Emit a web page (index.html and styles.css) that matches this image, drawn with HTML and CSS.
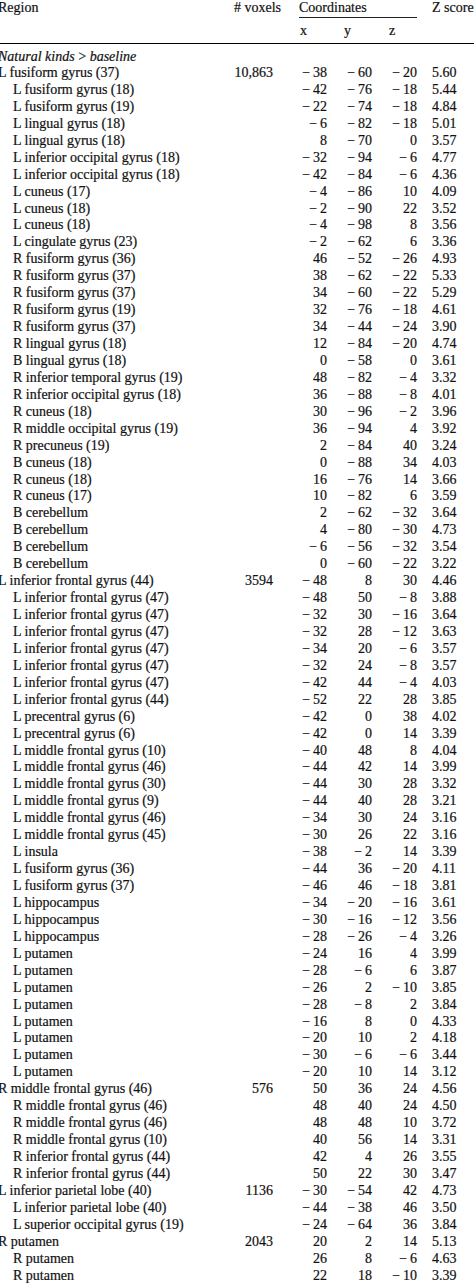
FILE: index.html
```html
<!DOCTYPE html>
<html lang="en">
<head>
<meta charset="utf-8">
<title>Activation clusters</title>
<link rel="stylesheet" href="styles.css">
</head>
<body>
<table class="results">
<colgroup>
<col class="c-region"><col class="c-vox"><col class="c-x"><col class="c-y"><col class="c-z"><col class="c-zs">
</colgroup>
<thead>
<tr>
<th rowspan="2" class="h-region">Region</th>
<th rowspan="2" class="h-vox"># voxels</th>
<th colspan="3" class="h-coord"><div class="coord-label">Coordinates</div></th>
<th rowspan="2" class="h-zs">Z score</th>
</tr>
<tr>
<th class="h-x">x</th>
<th class="h-y">y</th>
<th class="h-z">z</th>
</tr>
</thead>
<tbody>
<tr class="group"><td colspan="6">Natural kinds&thinsp;&gt;&thinsp;baseline</td></tr>
<tr class="lead"><td>L fusiform gyrus (37)</td><td>10,863</td><td>&minus;&#8201;38</td><td>&minus;&#8201;60</td><td>&minus;&#8201;20</td><td>5.60</td></tr>
<tr><td>L fusiform gyrus (18)</td><td></td><td>&minus;&#8201;42</td><td>&minus;&#8201;76</td><td>&minus;&#8201;18</td><td>5.44</td></tr>
<tr><td>L fusiform gyrus (19)</td><td></td><td>&minus;&#8201;22</td><td>&minus;&#8201;74</td><td>&minus;&#8201;18</td><td>4.84</td></tr>
<tr><td>L lingual gyrus (18)</td><td></td><td>&minus;&#8201;6</td><td>&minus;&#8201;82</td><td>&minus;&#8201;18</td><td>5.01</td></tr>
<tr><td>L lingual gyrus (18)</td><td></td><td>8</td><td>&minus;&#8201;70</td><td>0</td><td>3.57</td></tr>
<tr><td>L inferior occipital gyrus (18)</td><td></td><td>&minus;&#8201;32</td><td>&minus;&#8201;94</td><td>&minus;&#8201;6</td><td>4.77</td></tr>
<tr><td>L inferior occipital gyrus (18)</td><td></td><td>&minus;&#8201;42</td><td>&minus;&#8201;84</td><td>&minus;&#8201;6</td><td>4.36</td></tr>
<tr><td>L cuneus (17)</td><td></td><td>&minus;&#8201;4</td><td>&minus;&#8201;86</td><td>10</td><td>4.09</td></tr>
<tr><td>L cuneus (18)</td><td></td><td>&minus;&#8201;2</td><td>&minus;&#8201;90</td><td>22</td><td>3.52</td></tr>
<tr><td>L cuneus (18)</td><td></td><td>&minus;&#8201;4</td><td>&minus;&#8201;98</td><td>8</td><td>3.56</td></tr>
<tr><td>L cingulate gyrus (23)</td><td></td><td>&minus;&#8201;2</td><td>&minus;&#8201;62</td><td>6</td><td>3.36</td></tr>
<tr><td>R fusiform gyrus (36)</td><td></td><td>46</td><td>&minus;&#8201;52</td><td>&minus;&#8201;26</td><td>4.93</td></tr>
<tr><td>R fusiform gyrus (37)</td><td></td><td>38</td><td>&minus;&#8201;62</td><td>&minus;&#8201;22</td><td>5.33</td></tr>
<tr><td>R fusiform gyrus (37)</td><td></td><td>34</td><td>&minus;&#8201;60</td><td>&minus;&#8201;22</td><td>5.29</td></tr>
<tr><td>R fusiform gyrus (19)</td><td></td><td>32</td><td>&minus;&#8201;76</td><td>&minus;&#8201;18</td><td>4.61</td></tr>
<tr><td>R fusiform gyrus (37)</td><td></td><td>34</td><td>&minus;&#8201;44</td><td>&minus;&#8201;24</td><td>3.90</td></tr>
<tr><td>R lingual gyrus (18)</td><td></td><td>12</td><td>&minus;&#8201;84</td><td>&minus;&#8201;20</td><td>4.74</td></tr>
<tr><td>B lingual gyrus (18)</td><td></td><td>0</td><td>&minus;&#8201;58</td><td>0</td><td>3.61</td></tr>
<tr><td>R inferior temporal gyrus (19)</td><td></td><td>48</td><td>&minus;&#8201;82</td><td>&minus;&#8201;4</td><td>3.32</td></tr>
<tr><td>R inferior occipital gyrus (18)</td><td></td><td>36</td><td>&minus;&#8201;88</td><td>&minus;&#8201;8</td><td>4.01</td></tr>
<tr><td>R cuneus (18)</td><td></td><td>30</td><td>&minus;&#8201;96</td><td>&minus;&#8201;2</td><td>3.96</td></tr>
<tr><td>R middle occipital gyrus (19)</td><td></td><td>36</td><td>&minus;&#8201;94</td><td>4</td><td>3.92</td></tr>
<tr><td>R precuneus (19)</td><td></td><td>2</td><td>&minus;&#8201;84</td><td>40</td><td>3.24</td></tr>
<tr><td>B cuneus (18)</td><td></td><td>0</td><td>&minus;&#8201;88</td><td>34</td><td>4.03</td></tr>
<tr><td>R cuneus (18)</td><td></td><td>16</td><td>&minus;&#8201;76</td><td>14</td><td>3.66</td></tr>
<tr><td>R cuneus (17)</td><td></td><td>10</td><td>&minus;&#8201;82</td><td>6</td><td>3.59</td></tr>
<tr><td>B cerebellum</td><td></td><td>2</td><td>&minus;&#8201;62</td><td>&minus;&#8201;32</td><td>3.64</td></tr>
<tr><td>B cerebellum</td><td></td><td>4</td><td>&minus;&#8201;80</td><td>&minus;&#8201;30</td><td>4.73</td></tr>
<tr><td>B cerebellum</td><td></td><td>&minus;&#8201;6</td><td>&minus;&#8201;56</td><td>&minus;&#8201;32</td><td>3.54</td></tr>
<tr><td>B cerebellum</td><td></td><td>0</td><td>&minus;&#8201;60</td><td>&minus;&#8201;22</td><td>3.22</td></tr>
<tr class="lead"><td>L inferior frontal gyrus (44)</td><td>3594</td><td>&minus;&#8201;48</td><td>8</td><td>30</td><td>4.46</td></tr>
<tr><td>L inferior frontal gyrus (47)</td><td></td><td>&minus;&#8201;48</td><td>50</td><td>&minus;&#8201;8</td><td>3.88</td></tr>
<tr><td>L inferior frontal gyrus (47)</td><td></td><td>&minus;&#8201;32</td><td>30</td><td>&minus;&#8201;16</td><td>3.64</td></tr>
<tr><td>L inferior frontal gyrus (47)</td><td></td><td>&minus;&#8201;32</td><td>28</td><td>&minus;&#8201;12</td><td>3.63</td></tr>
<tr><td>L inferior frontal gyrus (47)</td><td></td><td>&minus;&#8201;34</td><td>20</td><td>&minus;&#8201;6</td><td>3.57</td></tr>
<tr><td>L inferior frontal gyrus (47)</td><td></td><td>&minus;&#8201;32</td><td>24</td><td>&minus;&#8201;8</td><td>3.57</td></tr>
<tr><td>L inferior frontal gyrus (47)</td><td></td><td>&minus;&#8201;42</td><td>44</td><td>&minus;&#8201;4</td><td>4.03</td></tr>
<tr><td>L inferior frontal gyrus (44)</td><td></td><td>&minus;&#8201;52</td><td>22</td><td>28</td><td>3.85</td></tr>
<tr><td>L precentral gyrus (6)</td><td></td><td>&minus;&#8201;42</td><td>0</td><td>38</td><td>4.02</td></tr>
<tr><td>L precentral gyrus (6)</td><td></td><td>&minus;&#8201;42</td><td>0</td><td>14</td><td>3.39</td></tr>
<tr><td>L middle frontal gyrus (10)</td><td></td><td>&minus;&#8201;40</td><td>48</td><td>8</td><td>4.04</td></tr>
<tr><td>L middle frontal gyrus (46)</td><td></td><td>&minus;&#8201;44</td><td>42</td><td>14</td><td>3.99</td></tr>
<tr><td>L middle frontal gyrus (30)</td><td></td><td>&minus;&#8201;44</td><td>30</td><td>28</td><td>3.32</td></tr>
<tr><td>L middle frontal gyrus (9)</td><td></td><td>&minus;&#8201;44</td><td>40</td><td>28</td><td>3.21</td></tr>
<tr><td>L middle frontal gyrus (46)</td><td></td><td>&minus;&#8201;34</td><td>30</td><td>24</td><td>3.16</td></tr>
<tr><td>L middle frontal gyrus (45)</td><td></td><td>&minus;&#8201;30</td><td>26</td><td>22</td><td>3.16</td></tr>
<tr><td>L insula</td><td></td><td>&minus;&#8201;38</td><td>&minus;&#8201;2</td><td>14</td><td>3.39</td></tr>
<tr><td>L fusiform gyrus (36)</td><td></td><td>&minus;&#8201;44</td><td>36</td><td>&minus;&#8201;20</td><td>4.11</td></tr>
<tr><td>L fusiform gyrus (37)</td><td></td><td>&minus;&#8201;46</td><td>46</td><td>&minus;&#8201;18</td><td>3.81</td></tr>
<tr><td>L hippocampus</td><td></td><td>&minus;&#8201;34</td><td>&minus;&#8201;20</td><td>&minus;&#8201;16</td><td>3.61</td></tr>
<tr><td>L hippocampus</td><td></td><td>&minus;&#8201;30</td><td>&minus;&#8201;16</td><td>&minus;&#8201;12</td><td>3.56</td></tr>
<tr><td>L hippocampus</td><td></td><td>&minus;&#8201;28</td><td>&minus;&#8201;26</td><td>&minus;&#8201;4</td><td>3.26</td></tr>
<tr><td>L putamen</td><td></td><td>&minus;&#8201;24</td><td>16</td><td>4</td><td>3.99</td></tr>
<tr><td>L putamen</td><td></td><td>&minus;&#8201;28</td><td>&minus;&#8201;6</td><td>6</td><td>3.87</td></tr>
<tr><td>L putamen</td><td></td><td>&minus;&#8201;26</td><td>2</td><td>&minus;&#8201;10</td><td>3.85</td></tr>
<tr><td>L putamen</td><td></td><td>&minus;&#8201;28</td><td>&minus;&#8201;8</td><td>2</td><td>3.84</td></tr>
<tr><td>L putamen</td><td></td><td>&minus;&#8201;16</td><td>8</td><td>0</td><td>4.33</td></tr>
<tr><td>L putamen</td><td></td><td>&minus;&#8201;20</td><td>10</td><td>2</td><td>4.18</td></tr>
<tr><td>L putamen</td><td></td><td>&minus;&#8201;30</td><td>&minus;&#8201;6</td><td>&minus;&#8201;6</td><td>3.44</td></tr>
<tr><td>L putamen</td><td></td><td>&minus;&#8201;20</td><td>10</td><td>14</td><td>3.12</td></tr>
<tr class="lead"><td>R middle frontal gyrus (46)</td><td>576</td><td>50</td><td>36</td><td>24</td><td>4.56</td></tr>
<tr><td>R middle frontal gyrus (46)</td><td></td><td>48</td><td>40</td><td>24</td><td>4.50</td></tr>
<tr><td>R middle frontal gyrus (46)</td><td></td><td>48</td><td>48</td><td>10</td><td>3.72</td></tr>
<tr><td>R middle frontal gyrus (10)</td><td></td><td>40</td><td>56</td><td>14</td><td>3.31</td></tr>
<tr><td>R inferior frontal gyrus (44)</td><td></td><td>42</td><td>4</td><td>26</td><td>3.55</td></tr>
<tr><td>R inferior frontal gyrus (44)</td><td></td><td>50</td><td>22</td><td>30</td><td>3.47</td></tr>
<tr class="lead"><td>L inferior parietal lobe (40)</td><td>1136</td><td>&minus;&#8201;30</td><td>&minus;&#8201;54</td><td>42</td><td>4.73</td></tr>
<tr><td>L inferior parietal lobe (40)</td><td></td><td>&minus;&#8201;44</td><td>&minus;&#8201;38</td><td>46</td><td>3.50</td></tr>
<tr><td>L superior occipital gyrus (19)</td><td></td><td>&minus;&#8201;24</td><td>&minus;&#8201;64</td><td>36</td><td>3.84</td></tr>
<tr class="lead"><td>R putamen</td><td>2043</td><td>20</td><td>2</td><td>14</td><td>5.13</td></tr>
<tr><td>R putamen</td><td></td><td>26</td><td>8</td><td>&minus;&#8201;6</td><td>4.63</td></tr>
<tr><td>R putamen</td><td></td><td>22</td><td>18</td><td>&minus;&#8201;10</td><td>3.39</td></tr>
</tbody>
</table>
</body>
</html>
```

FILE: styles.css
```css
html, body {
  margin: 0;
  padding: 0;
  background: #ffffff;
  overflow: hidden;
}

body {
  font-family: "Liberation Serif", "Times New Roman", serif;
  font-size: 14px;
  color: #111111;
  -webkit-text-stroke: 0.2px #111111;
}

.results {
  width: 476px;
  margin: 0 0 0 -2px;
  table-layout: fixed;
  border-collapse: separate;
  border-spacing: 0;
}

.c-region { width: 234px; }
.c-vox { width: 67px; }
.c-x { width: 32px; }
.c-y { width: 45px; }
.c-z { width: 45px; }
.c-zs { width: 53px; }

.results th {
  font-weight: normal;
  text-align: left;
  vertical-align: top;
  padding: 3px 0 0 0;
  line-height: 10px;
  white-space: nowrap;
}

.results .h-region,
.results .h-vox,
.results .h-zs {
  border-bottom: 1px solid #000;
}

.results .h-vox { padding-left: 2px; }
.results .h-zs { padding-left: 11px; }

.coord-label {
  padding-bottom: 4px;
  margin-right: 4px;
  border-bottom: 1px solid #222;
}

.results .h-x,
.results .h-y,
.results .h-z {
  line-height: 17px;
  padding-top: 4px;
  padding-bottom: 4px;
  border-bottom: 1px solid #000;
}

.results .h-x { padding-left: 1px; }
.results .h-y { padding-left: 13px; }
.results .h-z { padding-left: 13px; }

.results td {
  padding: 0;
  line-height: 16.93px;
  white-space: nowrap;
  vertical-align: top;
}

.results td:nth-child(1) { padding-left: 15px; }
.results td:nth-child(2) { text-align: right; padding-right: 26px; }
.results td:nth-child(3),
.results td:nth-child(4),
.results td:nth-child(5) { text-align: right; padding-right: 4px; }
.results td:nth-child(6) { padding-left: 11px; }

.results tr.lead td:first-child { padding-left: 0; }

.results tr.group td {
  padding: 4px 0 0 0;
  line-height: 17px;
  font-style: italic;
}
```
